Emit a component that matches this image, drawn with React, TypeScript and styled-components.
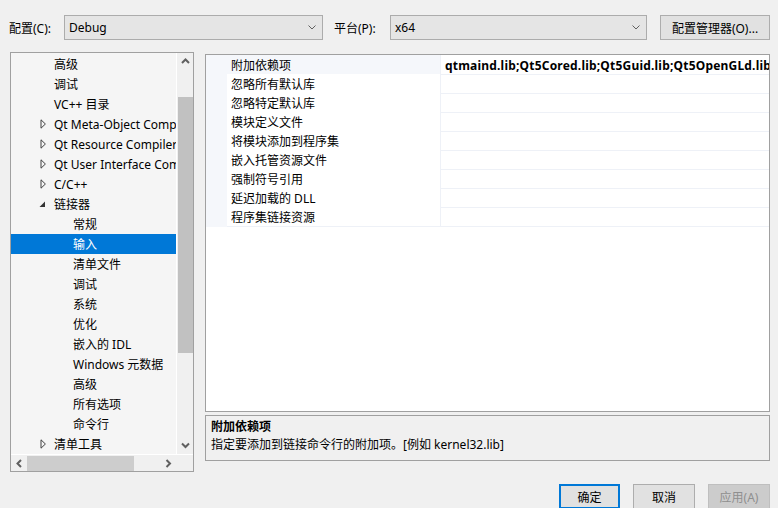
import React from "react";
import styled, { createGlobalStyle } from "styled-components";

const GlobalStyle = createGlobalStyle`
  html, body {
    margin: 0;
    padding: 0;
    background: #f0f0f0;
  }
  body {
    font-family: "Noto Sans", "Noto Sans CJK SC", sans-serif;
    font-size: 12px;
    color: #000;
  }
`;

const Window = styled.div`
  width: 778px;
  height: 508px;
  background: #f0f0f0;
  display: flex;
  flex-direction: column;
  overflow: hidden;
`;

/* ---------- top configuration bar ---------- */

const TopBar = styled.div`
  display: flex;
  align-items: center;
  height: 25px;
  margin-top: 15px;
  padding-left: 9px;
`;

const FieldLabel = styled.span<{ $width: number; $gap?: number }>`
  width: ${(p) => p.$width}px;
  margin-left: ${(p) => p.$gap ?? 0}px;
  flex: none;
  white-space: nowrap;
`;

const Combo = styled.div<{ $width: number }>`
  width: ${(p) => p.$width}px;
  height: 25px;
  box-sizing: border-box;
  flex: none;
  border: 1px solid #acacac;
  background: #e5e5e5;
  display: flex;
  align-items: center;
  padding-left: 4px;
  padding-right: 6px;
`;

const ComboText = styled.span`
  flex: 1;
`;

const PushButton = styled.div<{
  $width: number;
  $gap?: number;
  $variant?: "default" | "disabled";
}>`
  width: ${(p) => p.$width}px;
  margin-left: ${(p) => p.$gap ?? 0}px;
  height: 25px;
  box-sizing: border-box;
  flex: none;
  display: flex;
  align-items: center;
  justify-content: center;
  white-space: nowrap;
  border: ${(p) =>
    p.$variant === "default"
      ? "2px solid #0078d7"
      : p.$variant === "disabled"
      ? "1px solid #bfbfbf"
      : "1px solid #adadad"};
  background: ${(p) => (p.$variant === "disabled" ? "#cccccc" : "#e1e1e1")};
  color: ${(p) => (p.$variant === "disabled" ? "#8f8f8f" : "#000")};
`;

const Chevron = () => (
  <svg width="8" height="5" viewBox="0 0 8 5">
    <path d="M0.5 0.5 L4 4 L7.5 0.5" fill="none" stroke="#606060" strokeWidth="1" />
  </svg>
);

/* ---------- main area ---------- */

const Main = styled.div`
  display: flex;
  margin-top: 12px;
  padding-left: 10px;
  height: 420px;
`;

const TreePanel = styled.div`
  width: 184px;
  height: 420px;
  box-sizing: border-box;
  border: 1px solid #a0a0a0;
  background: #f5f5f5;
  display: flex;
  flex-direction: column;
`;

const TreeBody = styled.div`
  flex: 1;
  display: flex;
  min-height: 0;
`;

const TreeList = styled.div`
  flex: 1;
  overflow: hidden;
  padding-top: 1px;
`;

const TreeRow = styled.div<{ $level: number; $selected?: boolean }>`
  height: 20px;
  display: flex;
  align-items: center;
  padding-left: ${(p) => (p.$level === 1 ? 26 : 45)}px;
  white-space: nowrap;
  overflow: hidden;
  background: ${(p) => (p.$selected ? "#0078d7" : "transparent")};
  color: ${(p) => (p.$selected ? "#fff" : "#000")};
`;

const Expander = styled.span`
  width: 17px;
  flex: none;
  display: flex;
  align-items: center;
`;

const VScroll = styled.div`
  width: 17px;
  flex: none;
  background: #f0f0f0;
  border-left: 1px solid #ffffff;
  box-sizing: border-box;
  display: flex;
  flex-direction: column;
  align-items: center;
`;

const ScrollArrowBox = styled.div`
  width: 16px;
  height: 17px;
  flex: none;
  display: flex;
  align-items: center;
  justify-content: center;
`;

const VThumb = styled.div`
  width: 15px;
  height: 256px;
  background: #c1c1c1;
  margin-top: 27px;
`;

const VSpacer = styled.div`
  flex: 1;
`;

const HScroll = styled.div`
  height: 17px;
  flex: none;
  display: flex;
  background: #f0f0f0;
  border-top: 1px solid #ffffff;
  box-sizing: border-box;
`;

const HTrack = styled.div`
  flex: 1;
  display: flex;
  align-items: center;
`;

const HThumb = styled.div`
  width: 107px;
  height: 15px;
  background: #cdcdcd;
`;

const Corner = styled.div`
  width: 17px;
  flex: none;
  background: #f0f0f0;
`;

const RightPane = styled.div`
  width: 565px;
  margin-left: 11px;
  display: flex;
  flex-direction: column;
`;

const Grid = styled.div`
  height: 358px;
  margin-top: 2px;
  box-sizing: border-box;
  border: 1px solid #a0a0a0;
  background: #ffffff;
  overflow: hidden;
`;

const GridRow = styled.div`
  display: grid;
  grid-template-columns: 21px 214px 1fr;
  height: 19px;
`;

const Gutter = styled.div`
  background: #f5f7fb;
`;

const NameCell = styled.div<{ $active?: boolean }>`
  padding: 1px 0 0 4px;
  display: flex;
  align-items: center;
  white-space: nowrap;
  border-bottom: 1px solid #eef1f7;
  border-right: 1px solid #eef1f7;
  background: ${(p) => (p.$active ? "#f5f7fb" : "#ffffff")};
`;

const ValueCell = styled.div<{ $bold?: boolean }>`
  padding: 1px 0 0 4px;
  display: flex;
  align-items: center;
  white-space: nowrap;
  overflow: hidden;
  border-bottom: 1px solid #eef1f7;
  font-weight: ${(p) => (p.$bold ? 700 : 400)};
  letter-spacing: ${(p) => (p.$bold ? "0.2px" : "0")};
`;

const Description = styled.div`
  height: 46px;
  margin-top: 3px;
  box-sizing: border-box;
  border: 1px solid #a0a0a0;
  background: #f0f0f0;
  padding: 2px 4px 0 5px;
  display: flex;
  flex-direction: column;
  line-height: 18px;
`;

const DescTitle = styled.div`
  font-weight: 700;
`;

const Footer = styled.div`
  display: flex;
  justify-content: flex-end;
  gap: 13px;
  margin-top: 12px;
  padding-right: 8px;
`;

/* ---------- glyphs ---------- */

const Collapsed = () => (
  <svg width="7" height="10" viewBox="0 0 7 10" style={{ marginLeft: 3 }}>
    <path d="M1 0.8 L5.4 5 L1 9.2 Z" fill="none" stroke="#404040" strokeWidth="1" />
  </svg>
);

const Expanded = () => (
  <svg width="7" height="7" viewBox="0 0 7 7" style={{ marginLeft: 2 }}>
    <path d="M6 0.5 L6 6 L0.5 6 Z" fill="#333" />
  </svg>
);

const Caret = ({ dir }: { dir: "up" | "down" | "left" | "right" }) => {
  const d = {
    up: "M1 5 L4.5 1.5 L8 5",
    down: "M1 1.5 L4.5 5 L8 1.5",
    left: "M5 1 L1.5 4.5 L5 8",
    right: "M1.5 1 L5 4.5 L1.5 8",
  }[dir];
  const vertical = dir === "up" || dir === "down";
  return (
    <svg
      width={vertical ? 9 : 7}
      height={vertical ? 7 : 9}
      viewBox={vertical ? "0 0 9 7" : "0 0 7 9"}
    >
      <path d={d} fill="none" stroke="#606060" strokeWidth="2" />
    </svg>
  );
};

/* ---------- data ---------- */

type Node = { label: string; level: 1 | 2; state?: "open" | "closed"; selected?: boolean };

const treeNodes: Node[] = [
  { label: "高级", level: 1 },
  { label: "调试", level: 1 },
  { label: "VC++ 目录", level: 1 },
  { label: "Qt Meta-Object Compiler", level: 1, state: "closed" },
  { label: "Qt Resource Compiler", level: 1, state: "closed" },
  { label: "Qt User Interface Compiler", level: 1, state: "closed" },
  { label: "C/C++", level: 1, state: "closed" },
  { label: "链接器", level: 1, state: "open" },
  { label: "常规", level: 2 },
  { label: "输入", level: 2, selected: true },
  { label: "清单文件", level: 2 },
  { label: "调试", level: 2 },
  { label: "系统", level: 2 },
  { label: "优化", level: 2 },
  { label: "嵌入的 IDL", level: 2 },
  { label: "Windows 元数据", level: 2 },
  { label: "高级", level: 2 },
  { label: "所有选项", level: 2 },
  { label: "命令行", level: 2 },
  { label: "清单工具", level: 1, state: "closed" },
];

const properties: { name: string; value?: string }[] = [
  { name: "附加依赖项", value: "qtmaind.lib;Qt5Cored.lib;Qt5Guid.lib;Qt5OpenGLd.lib;%(AdditionalDependencies)" },
  { name: "忽略所有默认库" },
  { name: "忽略特定默认库" },
  { name: "模块定义文件" },
  { name: "将模块添加到程序集" },
  { name: "嵌入托管资源文件" },
  { name: "强制符号引用" },
  { name: "延迟加载的 DLL" },
  { name: "程序集链接资源" },
];

export default function App() {
  return (
    <>
      <GlobalStyle />
      <Window>
        <TopBar>
          <FieldLabel $width={55}>配置(C):</FieldLabel>
          <Combo $width={259}>
            <ComboText>Debug</ComboText>
            <Chevron />
          </Combo>
          <FieldLabel $width={56} $gap={11}>平台(P):</FieldLabel>
          <Combo $width={257}>
            <ComboText>x64</ComboText>
            <Chevron />
          </Combo>
          <PushButton $width={110} $gap={13}>配置管理器(O)...</PushButton>
        </TopBar>

        <Main>
          <TreePanel>
            <TreeBody>
              <TreeList>
                {treeNodes.map((n, i) => (
                  <TreeRow key={i} $level={n.level} $selected={n.selected}>
                    <Expander>
                      {n.state === "closed" && <Collapsed />}
                      {n.state === "open" && <Expanded />}
                    </Expander>
                    {n.label}
                  </TreeRow>
                ))}
              </TreeList>
              <VScroll>
                <ScrollArrowBox>
                  <Caret dir="up" />
                </ScrollArrowBox>
                <VThumb />
                <VSpacer />
                <ScrollArrowBox>
                  <Caret dir="down" />
                </ScrollArrowBox>
              </VScroll>
            </TreeBody>
            <HScroll>
              <ScrollArrowBox>
                <Caret dir="left" />
              </ScrollArrowBox>
              <HTrack>
                <HThumb />
              </HTrack>
              <ScrollArrowBox>
                <Caret dir="right" />
              </ScrollArrowBox>
              <Corner />
            </HScroll>
          </TreePanel>

          <RightPane>
            <Grid>
              {properties.map((p, i) => (
                <GridRow key={i}>
                  <Gutter />
                  <NameCell $active={i === 0}>{p.name}</NameCell>
                  <ValueCell $bold={!!p.value}>{p.value ?? ""}</ValueCell>
                </GridRow>
              ))}
            </Grid>
            <Description>
              <DescTitle>附加依赖项</DescTitle>
              <div>指定要添加到链接命令行的附加项。[例如 kernel32.lib]</div>
            </Description>
          </RightPane>
        </Main>

        <Footer>
          <PushButton $width={61} $variant="default">确定</PushButton>
          <PushButton $width={62}>取消</PushButton>
          <PushButton $width={62} $variant="disabled">应用(A)</PushButton>
        </Footer>
      </Window>
    </>
  );
}
